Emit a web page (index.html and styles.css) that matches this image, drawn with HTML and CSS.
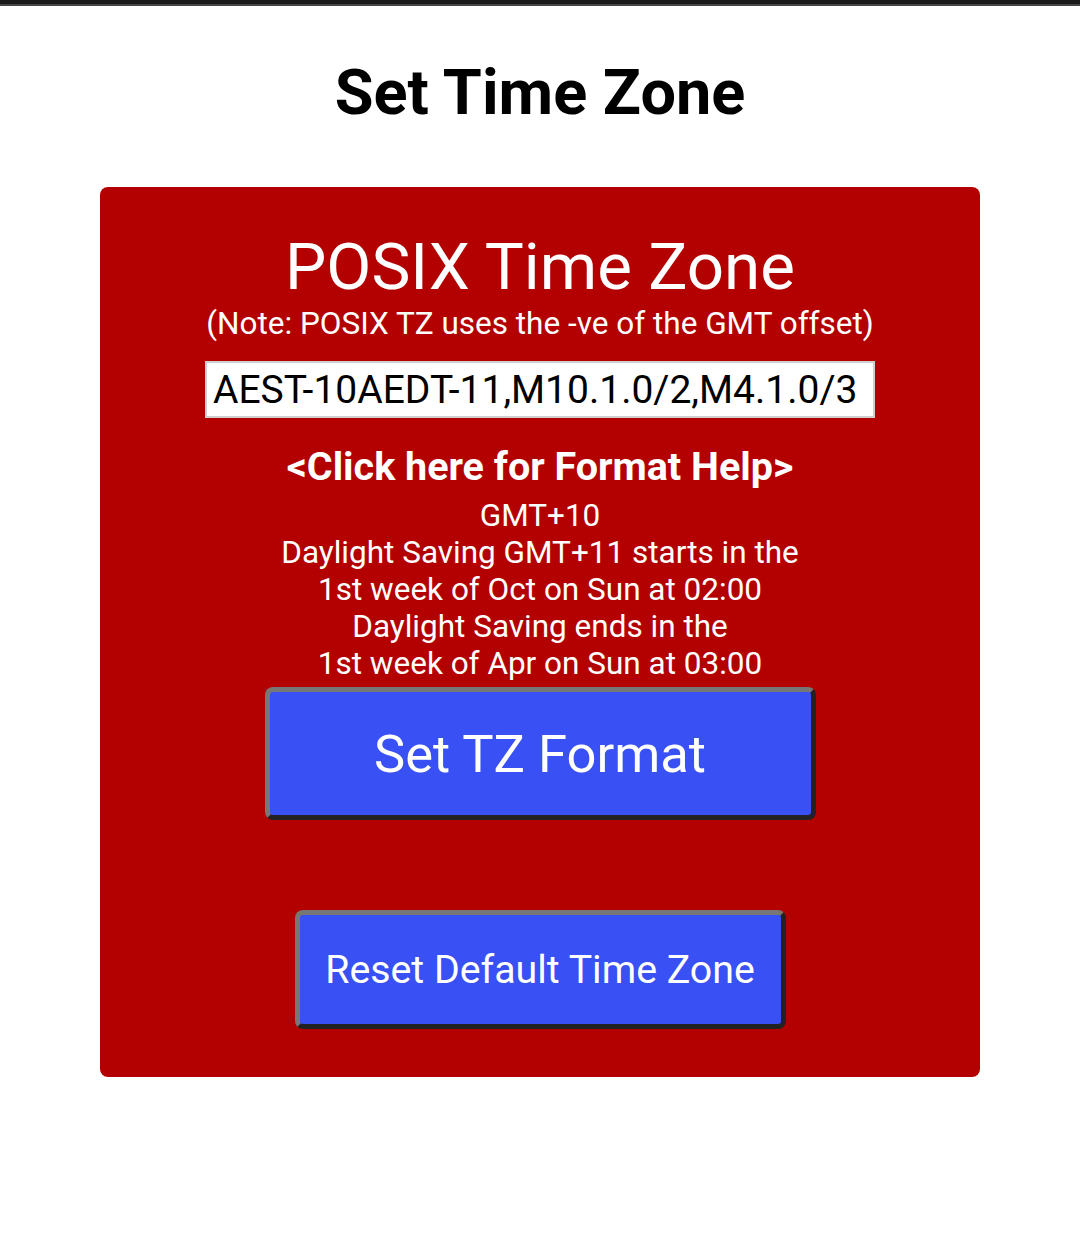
FILE: index.html
```html
<!DOCTYPE html>
<html>
<head>
<meta charset="utf-8">
<link rel="stylesheet" href="styles.css">
</head>
<body>
<div class="topbar"></div>
<h1 class="title">Set Time Zone</h1>
<div class="card">
  <div class="card-title">POSIX Time Zone</div>
  <div class="note">(Note: POSIX TZ uses the -ve of the GMT offset)</div>
  <input class="tz-input" type="text" value="AEST-10AEDT-11,M10.1.0/2,M4.1.0/3">
  <a class="help">&lt;Click here for Format Help&gt;</a>
  <div class="info">
    <div>GMT+10</div>
    <div>Daylight Saving GMT+11 starts in the</div>
    <div>1st week of Oct on Sun at 02:00</div>
    <div>Daylight Saving ends in the</div>
    <div>1st week of Apr on Sun at 03:00</div>
  </div>
  <button class="btn btn-big">Set TZ Format</button>
  <button class="btn btn-reset">Reset Default Time Zone</button>
</div>
</body>
</html>
```
FILE: styles.css
```css
html, body {
  margin: 0;
  padding: 0;
  background: #ffffff;
  font-family: Roboto, "Liberation Sans", sans-serif;
}
.topbar {
  height: 4px;
  background: #1a1a1a;
  border-bottom: 2px solid #444444;
}
.title {
  margin: 0;
  padding-top: 52px;
  text-align: center;
  font-size: 63px;
  font-weight: 700;
  line-height: 70px;
  color: #000;
}
.card {
  width: 880px;
  margin: 59px auto 0;
  background: #b30000;
  border-radius: 8px;
  display: flex;
  flex-direction: column;
  align-items: center;
  color: #fff;
  padding: 42px 0 48px;
  box-sizing: border-box;
}
.card-title {
  font-size: 65.5px;
  line-height: 76px;
}
.note {
  font-size: 31.5px;
  line-height: 37px;
}
.tz-input {
  margin-top: 19px;
  width: 670px;
  height: 57px;
  box-sizing: border-box;
  border: 2px solid #cfcfcf;
  font-family: Roboto, "Liberation Sans", sans-serif;
  font-size: 39px;
  padding: 0 6px;
  color: #000;
  background: #fff;
}
.help {
  margin-top: 25px;
  font-size: 39.5px;
  font-weight: 700;
  line-height: 48px;
  color: #fff;
}
.info {
  text-align: center;
  font-size: 31.5px;
  line-height: 37px;
  margin-top: 6px;
}
.btn {
  font-family: Roboto, "Liberation Sans", sans-serif;
  color: #fff;
  background: #3950f5;
  border: 5px solid;
  border-color: #777 #222 #222 #777;
  border-radius: 8px;
  box-sizing: border-box;
  padding: 0;
}
.btn-big {
  margin-top: 5px;
  width: 551px;
  height: 133px;
  font-size: 52.5px;
}
.btn-reset {
  margin-top: 90px;
  width: 491px;
  height: 119px;
  font-size: 39.3px;
}
```
